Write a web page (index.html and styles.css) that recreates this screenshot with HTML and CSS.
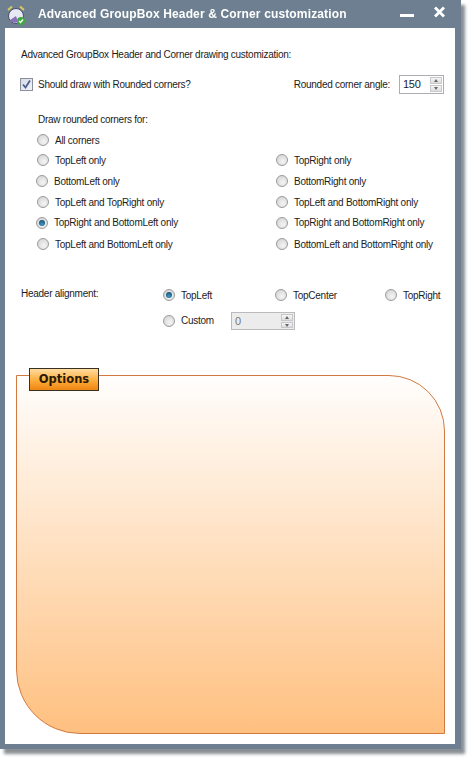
FILE: index.html
```html
<!DOCTYPE html>
<html lang="en">
<head>
<meta charset="utf-8">
<title>Advanced GroupBox Header &amp; Corner customization</title>
<link rel="stylesheet" href="styles.css">
</head>
<body>
<div class="window">
  <header class="titlebar">
    <svg class="app-icon" width="20" height="22" viewBox="0 0 20 22">
      <path d="M2 6 L6 2.500" stroke="#d8c860" stroke-width="2" fill="none"/>
      <path d="M18 6 L14 2.500" stroke="#d8c860" stroke-width="2" fill="none"/>
      <circle cx="10" cy="12" r="7.500" fill="#e6e8f2" stroke="#4a5070"/>
      <path d="M10 12 L4 16 A7 7 0 0 0 12 18 Z" fill="#8a70b8"/>
      <circle cx="15" cy="17" r="4" fill="#3fa83f"/>
      <path d="M13 17 L14.500 18.500 L17 15.500" stroke="#fff" stroke-width="1.300" fill="none"/>
    </svg>
    <h1 class="title">Advanced GroupBox Header &amp; Corner customization</h1>
    <span class="min-btn"></span>
    <svg class="close-btn" width="13" height="12" viewBox="0 0 13 12"><path d="M2 1.500 L11 10.500 M11 1.500 L2 10.500" stroke="#fff" stroke-width="2.800"/></svg>
  </header>
  <main class="content">
    <p class="intro">Advanced GroupBox Header and Corner drawing customization:</p>
    <div class="opts-row">
      <label class="check-label"><span class="checkbox"><svg width="11" height="11" viewBox="0 0 11 11"><path d="M2 5.500 L4.500 8.500 L9 1.500" stroke="#4a5f8c" stroke-width="1.800" fill="none"/></svg></span>Should draw with Rounded corners?</label>
      <div class="angle">
        <span>Rounded corner angle:</span>
        <span class="spin spin-angle"><span class="spin-val">150</span><span class="spin-btns"><i class="up"></i><i class="down"></i></span></span>
      </div>
    </div>
    <p class="draw-head">Draw rounded corners for:</p>
    <div class="radio-grid">
      <label class="radio-item"><span class="radio"></span>All corners</label><span></span>
      <label class="radio-item"><span class="radio"></span>TopLeft only</label>
      <label class="radio-item"><span class="radio"></span>TopRight only</label>
      <label class="radio-item nudge"><span class="radio"></span>BottomLeft only</label>
      <label class="radio-item"><span class="radio"></span>BottomRight only</label>
      <label class="radio-item"><span class="radio"></span>TopLeft and TopRight only</label>
      <label class="radio-item"><span class="radio"></span>TopLeft and BottomRight only</label>
      <label class="radio-item nudge"><span class="radio on"></span>TopRight and BottomLeft only</label>
      <label class="radio-item"><span class="radio"></span>TopRight and BottomRight only</label>
      <label class="radio-item"><span class="radio"></span>TopLeft and BottomLeft only</label>
      <label class="radio-item"><span class="radio"></span>BottomLeft and BottomRight only</label>
    </div>
    <div class="align">
      <span class="align-label">Header alignment:</span>
      <label class="radio-item span-two"><span class="radio on"></span>TopLeft</label>
      <label class="radio-item"><span class="radio"></span>TopCenter</label>
      <label class="radio-item"><span class="radio"></span>TopRight</label>
      <span></span>
      <label class="radio-item"><span class="radio"></span>Custom</label>
      <span class="spin spin-custom"><span class="spin-val">0</span><span class="spin-btns"><i class="up"></i><i class="down"></i></span></span>
    </div>
    <section class="group">
      <div class="group-head">Options</div>
    </section>
  </main>
</div>
</body>
</html>
```
FILE: styles.css
```css
* { box-sizing: border-box; }
html, body { margin: 0; padding: 0; background: #fff; }
body {
  width: 474px;
  height: 763px;
  overflow: hidden;
  font-family: "Liberation Sans", Arial, sans-serif;
  font-size: 10px;
  letter-spacing: -0.26px;
  color: #1c1c1c;
}
.window {
  width: 461px;
  height: 749px;
  background: #6d7f90;
  box-shadow: 4px 5px 3px #8a8f94;
  display: flex;
  flex-direction: column;
  filter: blur(0.4px);
}
.titlebar {
  height: 28px;
  flex: none;
  display: flex;
  align-items: center;
  position: relative;
  padding-left: 6px;
}
.app-icon { flex: none; margin-top: 1px; }
.title {
  margin: 0 0 0 12px;
  font-size: 12px;
  font-weight: 700;
  color: #fff;
  white-space: nowrap;
  letter-spacing: 0.14px;
  flex: 1;
}
.min-btn {
  flex: none;
  width: 14px;
  height: 3px;
  background: #fff;
  margin: 3px 19px 0 0;
}
.close-btn { flex: none; margin: -4px 15px 0 0; }
.content {
  flex: 1;
  margin: 0 6px 5px 5px;
  background: #fff;
  padding: 21px 10px 0 16px;
  display: flex;
  flex-direction: column;
}
p { margin: 0; }
.intro { line-height: 12px; }
.opts-row {
  display: flex;
  justify-content: space-between;
  align-items: center;
  margin-top: 13px;
  height: 20px;
  padding-right: 1px;
}
.check-label { display: flex; align-items: center; gap: 5px; margin-left: -1px; }
.checkbox {
  width: 13px;
  height: 13px;
  border: 1px solid #8a8f9c;
  background: linear-gradient(135deg, #d5dbe6, #f2f4f8);
  display: flex;
  align-items: center;
  justify-content: center;
}
.angle { display: flex; align-items: center; gap: 9px; }
.spin {
  display: flex;
  border: 1px solid #abadb3;
  background: #fff;
  height: 19px;
}
.spin-angle { width: 45px; }
.spin-custom {
  width: 64px;
  height: 18px;
  background: #ececec;
  border-color: #bbb;
  color: #777;
  grid-column: span 2;
  margin-top: 1px;
}
.spin-val { flex: 1; padding-left: 3px; line-height: 17px; font-size: 11px; }
.spin-btns { width: 14px; display: flex; flex-direction: column; gap: 1px; padding: 1px; }
.spin-btns i {
  flex: 1;
  background: linear-gradient(#f6f6f6, #dcdcdc);
  border: 1px solid #c6c8cc;
  position: relative;
}
.spin-btns i::after {
  content: "";
  position: absolute;
  left: 3px;
  width: 0;
  height: 0;
  border-left: 2px solid transparent;
  border-right: 2px solid transparent;
}
.up::after { top: 1px; border-bottom: 3px solid #666; }
.down::after { top: 1px; border-top: 3px solid #666; }
.draw-head { margin: 20px 0 0 17px; line-height: 12px; }
.radio-grid {
  display: grid;
  grid-template-columns: 239px 1fr;
  grid-template-rows: 20px 20px 22px 20px 21px 22px;
  margin: 4px 0 0 16px;
}
.radio-item { display: flex; align-items: center; gap: 6px; white-space: nowrap; }
.radio-item.nudge { margin-left: -1px; }
.radio {
  flex: none;
  width: 12px;
  height: 12px;
  border-radius: 50%;
  border: 1px solid #9a9a9a;
  background: radial-gradient(circle at 60% 65%, #f4f4f4, #cfcfcf);
  display: flex;
  align-items: center;
  justify-content: center;
}
.radio.on::after {
  content: "";
  width: 6px;
  height: 6px;
  border-radius: 50%;
  background: radial-gradient(circle at 50% 70%, #3d9ac8, #0d3f66);
}
.align {
  display: grid;
  grid-template-columns: 142px 68px 44px 110px 1fr;
  grid-template-rows: 22px 29px;
  margin-top: 29px;
  align-items: center;
}
.align-label { margin-top: -4px; }
.align .span-two { grid-column: span 2; }
.group {
  margin: 40px 0 0 -5px;
  width: 429px;
  height: 359px;
  position: relative;
  border: 1px solid #d2793f;
  border-radius: 0 56px 0 64px;
  background: linear-gradient(#fffefd, #ffc080);
}
.group-head {
  position: absolute;
  left: 12px;
  top: -8px;
  width: 70px;
  height: 23px;
  border: 1px solid #3a3020;
  background: linear-gradient(#ffdca0, #ffac3a 55%, #ec8612);
  font-family: "DejaVu Sans", Verdana, sans-serif;
  font-size: 11.5px;
  font-weight: 700;
  letter-spacing: 0;
  color: #2a1a05;
  text-align: center;
  line-height: 21px;
}
```
